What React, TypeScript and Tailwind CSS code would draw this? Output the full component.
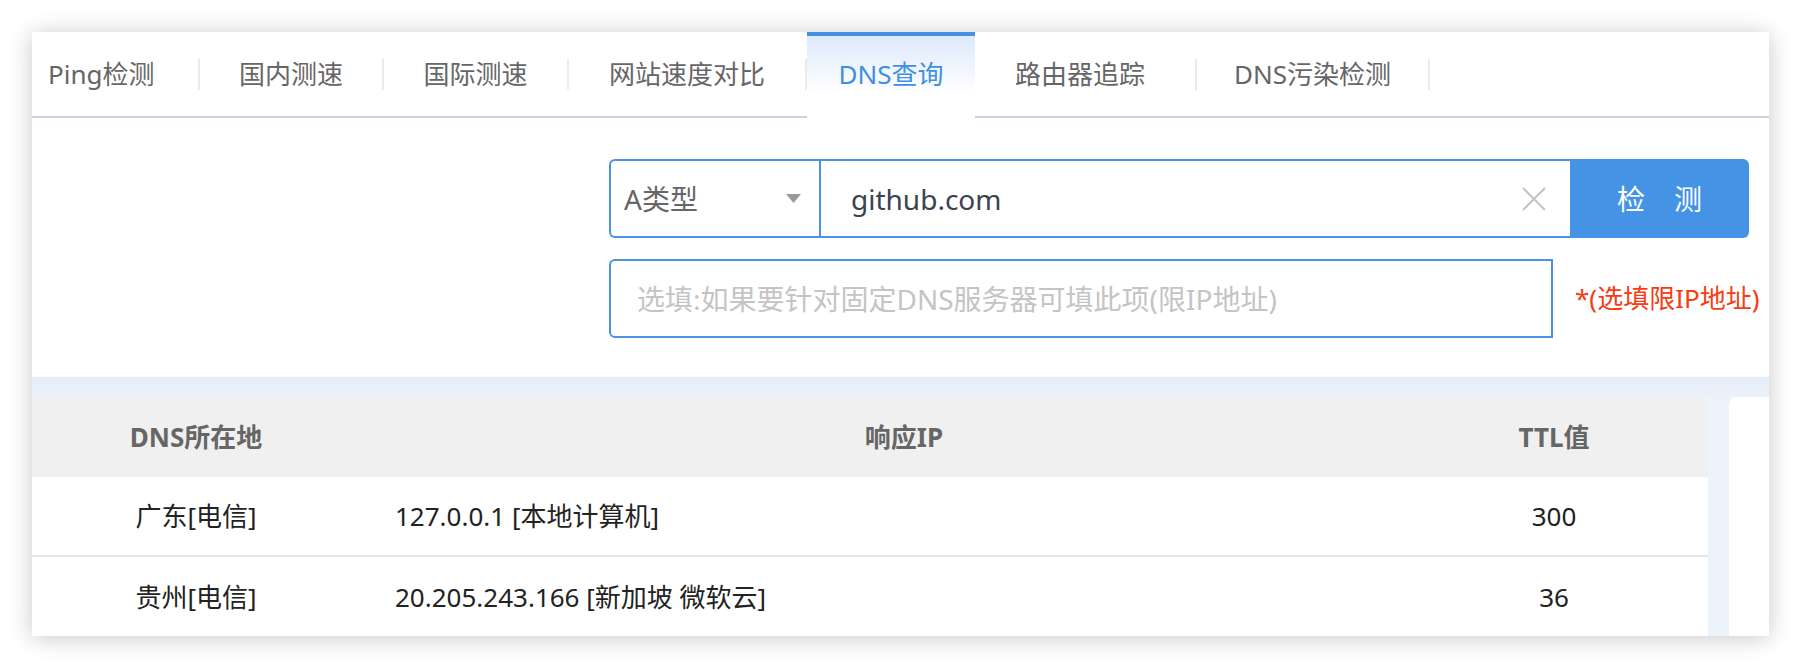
import React from "react";

type Tab = { label: string; cls: string; active?: boolean; sep: boolean };

const tabs: Tab[] = [
  { label: "Ping检测", cls: "w-[166px] pl-[16px] justify-start", sep: true },
  { label: "国内测速", cls: "w-[182px] justify-center", sep: true },
  { label: "国际测速", cls: "w-[183px] justify-center", sep: true },
  { label: "网站速度对比", cls: "w-[236px] justify-center", sep: true },
  { label: "DNS查询", cls: "w-[168px] justify-center", active: true, sep: false },
  { label: "路由器追踪", cls: "w-[220px] pl-[40px] justify-start", sep: true },
  { label: "DNS污染检测", cls: "w-[231px] justify-center", sep: true },
];

const rows = [
  { loc: "广东[电信]", ip: "127.0.0.1 [本地计算机]", ttl: "300" },
  { loc: "贵州[电信]", ip: "20.205.243.166 [新加坡 微软云]", ttl: "36" },
];

export default function App() {
  return (
    <div className="w-[1801px] h-[669px] bg-white pt-[32px] pl-[32px] font-['Noto_Sans','Noto_Sans_CJK_SC',sans-serif] text-[26px] overflow-hidden">
      <div className="w-[1737px] h-[604px] bg-white shadow-[0_2px_22px_rgba(0,0,0,0.22)] flex flex-col overflow-hidden">
        {/* Tabs */}
        <div className="h-[86px] border-b-2 border-[#c9d2e1] flex items-stretch shrink-0">
          {tabs.map((t) => (
            <React.Fragment key={t.label}>
              {t.active ? (
                <div
                  className={`${t.cls} flex items-center -mb-[2px] pb-[6px] border-t-4 border-[#4390e5] bg-gradient-to-b from-[#dde9fb] via-white via-[70%] to-white text-[#3f8fe3] leading-none`}
                >
                  {t.label}
                </div>
              ) : (
                <div className={`${t.cls} flex items-center text-[#666666] leading-none`}>{t.label}</div>
              )}
              {t.sep && (
                <div className="flex items-center">
                  <div className="w-[2px] h-[31px] bg-[#ebebeb]" />
                </div>
              )}
            </React.Fragment>
          ))}
        </div>

        {/* Form */}
        <div className="h-[259px] shrink-0 pl-[577px] pt-[41px] flex flex-col gap-[21px]">
          <div className="flex h-[79px] w-[1140px] text-[28px]">
            <div className="flex flex-1 border-2 border-r-0 border-[#4a93e2] rounded-l-[6px]">
              <div className="w-[210px] border-r-2 border-[#4a93e2] flex items-center pl-[13px] pr-[18px]">
                <span className="text-[#666666] flex-1">A类型</span>
                <svg width="15" height="9" viewBox="0 0 15 9">
                  <path d="M0 0 H15 L7.5 9 Z" fill="#999999" />
                </svg>
              </div>
              <input
                className="flex-1 min-w-0 pl-[30px] outline-none text-[#3b4250] bg-white"
                defaultValue="github.com"
              />
              <div className="flex items-center pr-[24px] pl-[10px]">
                <svg width="24" height="24" viewBox="0 0 24 24">
                  <path d="M1 1 L23 23 M23 1 L1 23" stroke="#c4c4c4" strokeWidth="2" fill="none" />
                </svg>
              </div>
            </div>
            <button className="w-[179px] bg-[#4493e4] rounded-r-[6px] text-white flex items-center justify-center gap-[29px]">
              <span>检</span>
              <span>测</span>
            </button>
          </div>
          <div className="flex items-center h-[79px]">
            <input
              className="w-[944px] h-[79px] text-[28px] border-2 border-[#4a93e2] rounded-l-[6px] pl-[26px] outline-none placeholder:text-[#c4c4c4]"
              placeholder="选填:如果要针对固定DNS服务器可填此项(限IP地址)"
            />
            <span className="ml-[22px] text-[#f63c12] whitespace-nowrap">*(选填限IP地址)</span>
          </div>
        </div>

        {/* Results */}
        <div className="flex-1 bg-gradient-to-b from-[#e5edf7] to-[#edf3fa] to-[25px] bg-[#ecf2f9] pt-[20px] flex gap-[21px]">
          <div className="w-[1676px] bg-white rounded-tr-[6px] overflow-hidden flex flex-col">
            <div className="h-[80px] bg-[#f0f0f0] flex items-center font-bold text-[#666666]">
              <div className="w-[328px] text-center">DNS所在地</div>
              <div className="w-[1040px] text-center pl-[48px]">响应IP</div>
              <div className="w-[308px] text-center">TTL值</div>
            </div>
            {rows.map((r, i) => (
              <div
                key={r.ip}
                className={`h-[80px] flex items-center text-[#222222] ${i === 0 ? "border-b-2 border-[#e6e6e6]" : ""}`}
              >
                <div className="w-[328px] text-center">{r.loc}</div>
                <div className="w-[1040px] pl-[35px]">{r.ip}</div>
                <div className="w-[308px] text-center">{r.ttl}</div>
              </div>
            ))}
          </div>
          <div className="flex-1 bg-white rounded-tl-[8px]" />
        </div>
      </div>
    </div>
  );
}
